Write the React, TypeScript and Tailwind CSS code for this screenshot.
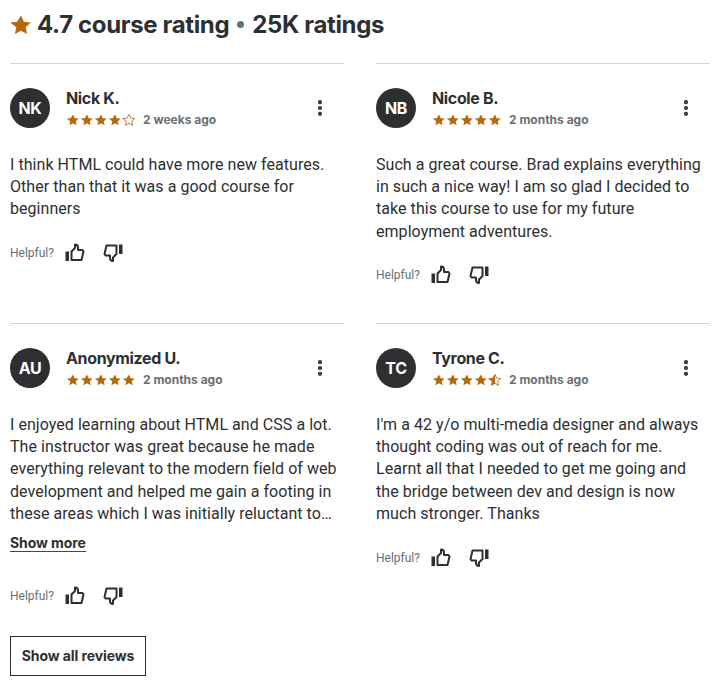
import { useId } from 'react';
import { MoreVertical } from 'lucide-react';

const reviews = [
  {
    id: 'NK',
    name: 'Nick K.',
    stars: 4,
    when: '2 weeks ago',
    lines: ['I think HTML could have more new features.', 'Other than that it was a good course for', 'beginners'],
  },
  {
    id: 'NB',
    name: 'Nicole B.',
    stars: 5,
    when: '2 months ago',
    lines: ['Such a great course. Brad explains everything', 'in such a nice way! I am so glad I decided to', 'take this course to use for my future', 'employment adventures.'],
  },
  {
    id: 'AU',
    name: 'Anonymized U.',
    stars: 5,
    when: '2 months ago',
    lines: [
      'I enjoyed learning about HTML and CSS a lot.',
      'The instructor was great because he made',
      'everything relevant to the modern field of web',
      'development and helped me gain a footing in',
      'these areas which I was initially reluctant to…',
    ],
    more: true,
  },
  {
    id: 'TC',
    name: 'Tyrone C.',
    stars: 4.5,
    when: '2 months ago',
    lines: ["I'm a 42 y/o multi-media designer and always", 'thought coding was out of reach for me.', 'Learnt all that I needed to get me going and', 'the bridge between dev and design is now', 'much stronger. Thanks'],
  },
];

const STAR = 'M12 2.5l2.9 6.3 6.9.8-5.1 4.7 1.4 6.8-6.1-3.4-6.1 3.4 1.4-6.8L1.2 9.600l6.900-.8z';

function Star({ fill, size = 14 }: { fill: number; size?: number }) {
  const clipId = useId();
  return (
    <svg width={size} height={size} viewBox="0 0 24 24" className="shrink-0">
      <defs>
        <clipPath id={clipId}>
          <rect x="0" y="0" width="12" height="24" />
        </clipPath>
      </defs>
      <path d={STAR} fill={fill === 1 ? '#b4690e' : 'none'} stroke="#b4690e" strokeWidth={fill === 1 ? 0 : 1.5} />
      {fill === 0.5 && <path d={STAR} fill="#b4690e" clipPath={`url(#${clipId})`} />}
    </svg>
  );
}

function Stars({ value }: { value: number }) {
  return (
    <div className="flex items-center">
      {[1, 2, 3, 4, 5].map((n) => (
        <Star key={n} fill={value >= n ? 1 : value >= n - 0.5 ? 0.5 : 0} />
      ))}
    </div>
  );
}

function ThumbUp() {
  return (
    <svg width="20" height="20" viewBox="0 0 20 20" fill="none" stroke="#2d2f31" strokeWidth="2">
      <rect x="0.500" y="8.500" width="3.500" height="9.500" fill="#2d2f31" stroke="none" />
      <path d="M6.500 8.500 10 5V1.500c2 0 3 1.500 3 3V7h4.500l1 1.500-2 8.500H6.500z" strokeLinejoin="round" />
    </svg>
  );
}

function ThumbDown() {
  return (
    <svg width="20" height="20" viewBox="0 0 20 20" fill="none" stroke="#2d2f31" strokeWidth="2">
      <rect x="16" y="1.500" width="3.500" height="9.500" fill="#2d2f31" stroke="none" />
      <path d="M13.500 11 10 14.500V18c-2 0-3-1.500-3-3v-2.500H2.500l-1-1.500 2-8.500h10z" strokeLinejoin="round" />
    </svg>
  );
}

function Review({ review }: { review: (typeof reviews)[number] }) {
  return (
    <div className="border-t border-[#d1d2e0] pt-6 flex flex-col">
      <div className="flex items-center">
        <div className="w-10 h-10 rounded-full bg-[#2d2f31] text-white flex items-center justify-center font-bold text-base tracking-[-0.3px] shrink-0">
          {review.id}
        </div>
        <div className="ml-4 flex-1">
          <div className="font-bold text-base tracking-[-0.35px] leading-[19px] text-[#2d2f31]">{review.name}</div>
          <div className="flex items-center gap-[7px] mt-1">
            <Stars value={review.stars} />
            <span className="font-bold text-xs text-[#6a6f73]">{review.when}</span>
          </div>
        </div>
        <MoreVertical size={20} strokeWidth={3} className="text-[#2d2f31] mr-[14px]" />
      </div>
      <div className="mt-[25.6px] font-['Roboto',sans-serif] text-base tracking-[0.05px] leading-[22.400px] text-[#2d2f31] whitespace-nowrap">
        {review.lines.map((line) => (
          <div key={line}>{line}</div>
        ))}
      </div>
      {review.more && (
        <div className="mt-[4.4px]">
          <span className="inline-block font-bold text-sm tracking-[-0.1px] leading-[17px] text-[#2d2f31] border-b border-[#5624d0]">Show more</span>
        </div>
      )}
      <div className={`flex items-center ${review.more ? 'mt-[32px]' : 'mt-[22px]'}`}>
        <span className="font-['Roboto',sans-serif] text-xs text-[#6a6f73]">Helpful?</span>
        <span className="ml-[11px]"><ThumbUp /></span>
        <span className="ml-[18px]"><ThumbDown /></span>
      </div>
    </div>
  );
}

export default function App() {
  return (
    <main className="w-[724px] h-[688px] overflow-hidden bg-white pl-[10px] pr-[14px] font-['Inter',sans-serif]">
      <h2 className="flex items-center h-[63px] pb-[14px] text-[24px] tracking-[-0.35px] font-bold text-[#2d2f31]">
        <span className="-ml-[1px]"><Star fill={1} size={24} /></span>
        <span className="ml-[4px]">4.7 course rating</span>
        <span className="mx-[8px] w-[7px] h-[7px] rounded-full bg-[#6a6f73]" />
        <span>25K ratings</span>
      </h2>
      <div className="grid grid-cols-2 gap-x-8 grid-rows-[260px_auto]">
        {reviews.map((r) => (
          <Review key={r.id} review={r} />
        ))}
      </div>
      <button className="mt-[30px] w-[136px] h-10 border border-[#2d2f31] font-bold text-sm tracking-[-0.1px] text-[#2d2f31]">Show all reviews</button>
    </main>
  );
}
